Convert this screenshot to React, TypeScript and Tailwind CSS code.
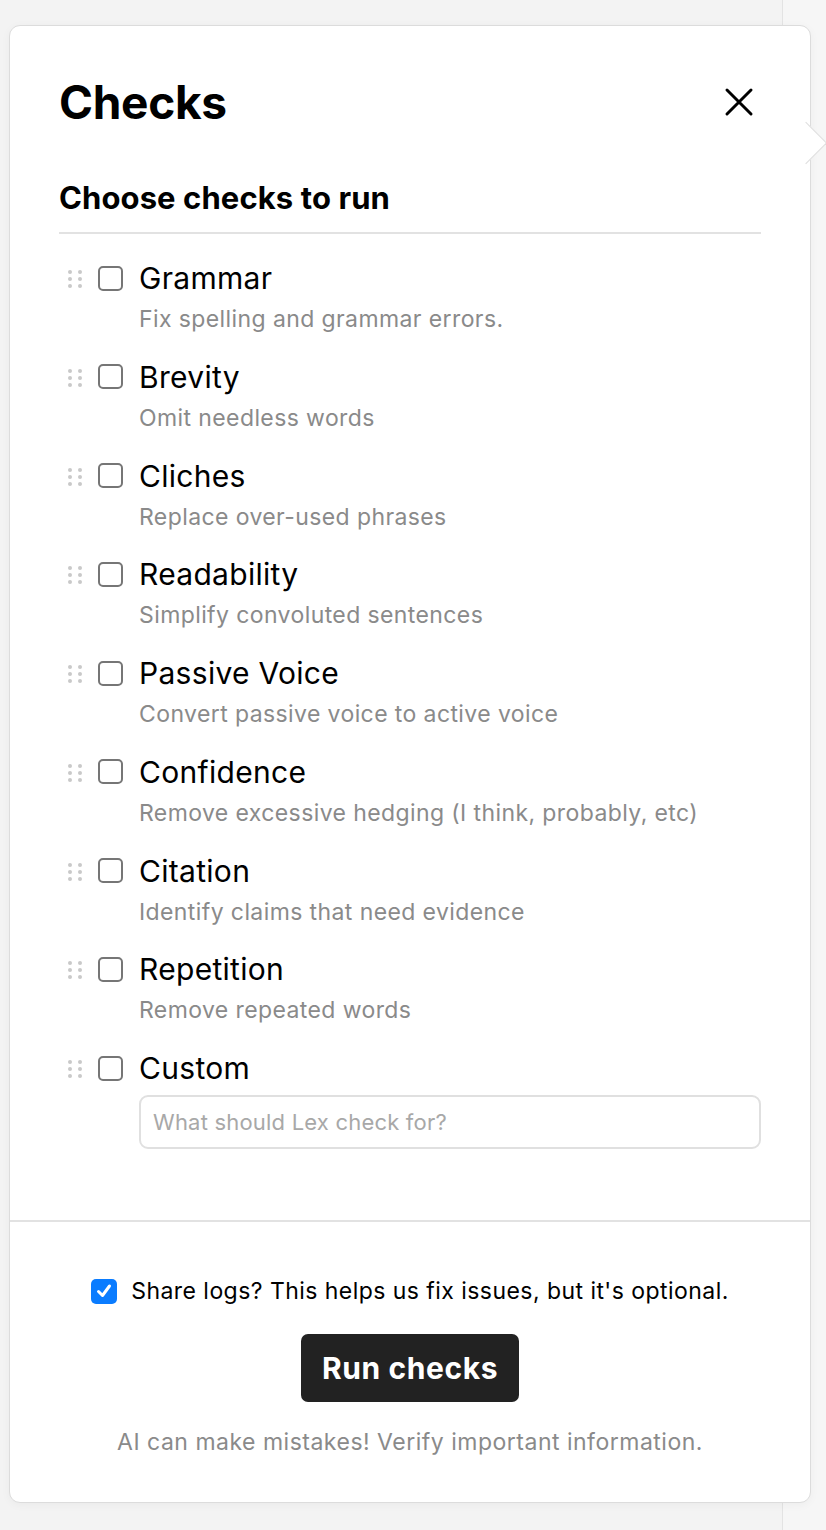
import React from "react";

const checks = [
  { name: "Grammar", desc: "Fix spelling and grammar errors." },
  { name: "Brevity", desc: "Omit needless words" },
  { name: "Cliches", desc: "Replace over-used phrases" },
  { name: "Readability", desc: "Simplify convoluted sentences" },
  { name: "Passive Voice", desc: "Convert passive voice to active voice" },
  { name: "Confidence", desc: "Remove excessive hedging (I think, probably, etc)" },
  { name: "Citation", desc: "Identify claims that need evidence" },
  { name: "Repetition", desc: "Remove repeated words" },
];

function Grip() {
  return (
    <div className="grid w-[14px] grid-cols-2 gap-x-[5px] gap-y-[3px] pt-[2px]">
      {Array.from({ length: 6 }).map((_, i) => (
        <span key={i} className="h-[4px] w-[4px] rounded-full bg-[#c9c9c9]" />
      ))}
    </div>
  );
}

function Box() {
  return <span className="block h-[25px] w-[25px] rounded-[5px] border-2 border-[#767676] bg-white" />;
}

function CheckRow({ name, desc }: { name: string; desc?: string }) {
  return (
    <div className="flex">
      <div className="flex h-[36px] w-[80px] shrink-0 items-center pl-[9px]">
        <Grip />
        <div className="ml-[16px]">
          <Box />
        </div>
      </div>
      <div className="flex-1">
        <div className="h-[36px] text-[30px] leading-[36px] tracking-[0.3px] text-black">{name}</div>
        {desc && (
          <div className="mt-[8px] h-[30px] text-[23px] leading-[30px] tracking-[0.4px] text-[#8a8a8a]">{desc}</div>
        )}
      </div>
    </div>
  );
}

export default function App() {
  return (
    <div className="relative h-[1530px] w-[826px] overflow-hidden bg-[#f3f3f3] font-['Inter',sans-serif]">
      <div className="absolute inset-y-0 left-[782px] right-0 border-l border-[#e3e3e3] bg-[#f6f6f6]" />
      <div className="relative ml-[9px] mt-[25px] flex h-[1478px] w-[802px] flex-col rounded-[11px] border border-[#dcdcdc] bg-white shadow-[0_2px_10px_rgba(0,0,0,0.04)]">
        <span className="absolute right-[-11px] top-[102px] h-[30px] w-[30px] rotate-45 border-r border-t border-[#dedede] bg-white" />
        <div className="relative flex-1 px-[49px]">
          <div className="flex items-center justify-between pt-[48px]">
            <h1 className="text-[46px] font-bold leading-[56px] tracking-[-0.3px] text-black">Checks</h1>
            <svg width="32" height="32" viewBox="0 0 32 32" className="mr-[6px]">
              <path d="M4 4 L28 28 M28 4 L4 28" stroke="black" strokeWidth="3" strokeLinecap="round" />
            </svg>
          </div>
          <h2 className="mt-[48px] text-[31px] font-bold leading-[40px] tracking-[0.1px] text-black">Choose checks to run</h2>
          <div className="mt-[14px] h-[2px] bg-[#e2e2e2]" />
          <div className="pt-[26px]">
            {checks.map((c) => (
              <div key={c.name} className="h-[98.75px]">
                <CheckRow name={c.name} desc={c.desc} />
              </div>
            ))}
            <CheckRow name="Custom" />
            <div className="ml-[80px] mt-[9px] flex h-[54px] items-center rounded-[9px] border-2 border-[#e0e0e0] px-[12px] text-[22px] tracking-[0.2px] text-[#a8a8a8]">
              What should Lex check for?
            </div>
          </div>
        </div>
        <div className="h-[2px] bg-[#e2e2e2]" />
        <div className="flex h-[280px] flex-col items-center pt-[54px]">
          <div className="flex items-center">
            <span className="flex h-[25px] w-[26px] items-center justify-center rounded-[5px] bg-[#0a7cff]">
              <svg width="18" height="18" viewBox="0 0 18 18">
                <path d="M3.5 9.5 L7.5 13.5 L14.5 4" stroke="white" strokeWidth="3" fill="none" strokeLinecap="round" strokeLinejoin="round" />
              </svg>
            </span>
            <span className="ml-[14px] text-[23px] leading-[30px] tracking-[0.45px] text-black">
              Share logs? This helps us fix issues, but it's optional.
            </span>
          </div>
          <button className="mt-[28px] h-[68px] rounded-[7px] bg-[#222222] px-[21px] text-[30px] font-bold tracking-[0.6px] text-white">
            Run checks
          </button>
          <div className="mt-[25px] text-[23px] leading-[30px] tracking-[0.5px] text-[#8a8a8a]">
            AI can make mistakes! Verify important information.
          </div>
        </div>
      </div>
    </div>
  );
}
